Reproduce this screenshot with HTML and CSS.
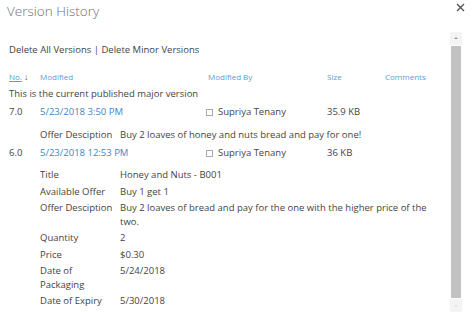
FILE: index.html
```html
<html lang="en">
  <head>
    <meta charset="UTF-8" />
    <title>Version History</title>
    <link rel="stylesheet" href="styles.css">
  </head>
  <body>
    <div class="dialog">
      <div class="dlg_head">
        <h1>Version History</h1>
        <button class="close" title="close">
          <svg width="9" height="9" viewBox="0 0 9 9"><path d="M1 1L8 8M8 1L1 8" stroke="#555" stroke-width="1.4" /></svg>
        </button>
      </div>

      <div class="dlg_body">
        <div class="content">
          <p class="actions">Delete All Versions | Delete Minor Versions</p>

          <div class="row head">
            <span><u>No.</u> <b class="sort">&#8595;</b></span>
            <span>Modified</span>
            <span class="by">Modified By</span>
            <span>Size</span>
            <span>Comments</span>
          </div>
          <p class="current">This is the current published major version</p>

          <div class="row ver">
            <span>7.0</span>
            <span class="link">5/23/2018 3:50 PM</span>
            <span><i class="chk"></i>Supriya Tenany</span>
            <span>35.9 KB</span>
            <span></span>
          </div>
          <div class="props first">
            <span class="name">Offer Desciption</span>
            <span class="value nowrap">Buy 2 loaves of honey and nuts bread and pay for one!</span>
          </div>

          <div class="row ver">
            <span>6.0</span>
            <span class="link">5/23/2018 12:53 PM</span>
            <span><i class="chk"></i>Supriya Tenany</span>
            <span>36 KB</span>
            <span></span>
          </div>
          <div class="props">
            <span class="name">Title</span>
            <span class="value">Honey and Nuts - B001</span>
            <span class="name">Available Offer</span>
            <span class="value">Buy 1 get 1</span>
            <span class="name">Offer Desciption</span>
            <span class="value">Buy 2 loaves of bread and pay for the one with the higher price of the two.</span>
            <span class="name">Quantity</span>
            <span class="value">2</span>
            <span class="name">Price</span>
            <span class="value">$0.30</span>
            <span class="name">Date of Packaging</span>
            <span class="value">5/24/2018</span>
            <span class="name">Date of Expiry</span>
            <span class="value">5/30/2018</span>
          </div>
        </div>

        <div class="scrollbar">
          <span class="arrow up"></span>
          <span class="thumb"></span>
          <span class="arrow down"></span>
        </div>
      </div>
    </div>
  </body>
</html>
```

FILE: styles.css
```css
* {
  padding: 0;
  margin: 0;
  box-sizing: border-box;
}

body {
  width: 474px;
  height: 312px;
  overflow: hidden;
  background: #fff;
  font-family: "Open Sans", "Noto Sans", sans-serif;
  font-size: 9.5px;
  color: #444;
}

.dialog {
  height: 100%;
  display: flex;
  flex-direction: column;
}

.dlg_head {
  display: flex;
  justify-content: space-between;
  align-items: flex-start;
  height: 32px;
  padding: 0 8px 0 7px;
}
.dlg_head h1 {
  font-weight: 300;
  font-size: 13.5px;
  color: #707070;
  line-height: 22px;
}
.close {
  border: none;
  outline: none;
  background: transparent;
  margin-top: 3px;
  width: 10px;
  height: 10px;
  display: flex;
}

.dlg_body {
  flex: 1;
  display: flex;
  min-height: 0;
}
.content {
  flex: 1;
  padding: 11px 0 0 9px;
}

.actions {
  line-height: 14px;
  margin-bottom: 14px;
}

.row {
  display: grid;
  grid-template-columns: 31px 166px 121px 58px 1fr;
  align-items: center;
}
.row.head {
  font-size: 8px;
  color: #5b9bd5;
  line-height: 12px;
}
.row.head .by {
  padding-left: 2px;
}
.sort {
  font-weight: bold;
  color: #333;
  font-size: 8.5px;
}
.current {
  line-height: 15px;
  margin-top: 3px;
}
.row.ver {
  line-height: 16px;
  margin-top: 3px;
}
.link {
  color: #3a87c8;
}
.chk {
  display: inline-block;
  width: 7px;
  height: 7px;
  border: 1px solid #aaa;
  margin-right: 5px;
  vertical-align: -1px;
}

.props {
  display: grid;
  grid-template-columns: 80px 312px;
  margin-left: 31px;
  line-height: 13.5px;
  row-gap: 3px;
  margin-top: 7.5px;
  margin-bottom: 5px;
}
.props.first {
  margin-top: 7.5px;
  margin-bottom: 3.5px;
}
.props .name {
  padding-right: 5px;
}
.nowrap {
  white-space: nowrap;
}

.scrollbar {
  width: 12px;
  margin-right: 12px;
  display: flex;
  flex-direction: column;
  align-items: center;
}
.arrow {
  width: 12px;
  height: 13px;
  background: #f4f4f4;
  position: relative;
}
.arrow::after {
  content: "";
  position: absolute;
  left: 4px;
  border-left: 2px solid transparent;
  border-right: 2px solid transparent;
}
.arrow.up::after {
  top: 5px;
  border-bottom: 2px solid #999;
}
.arrow.down::after {
  top: 6px;
  border-top: 2px solid #ddd;
}
.thumb {
  flex: 1;
  width: 10px;
  background: #c2c2c2;
  margin: 1px 0;
}
```
